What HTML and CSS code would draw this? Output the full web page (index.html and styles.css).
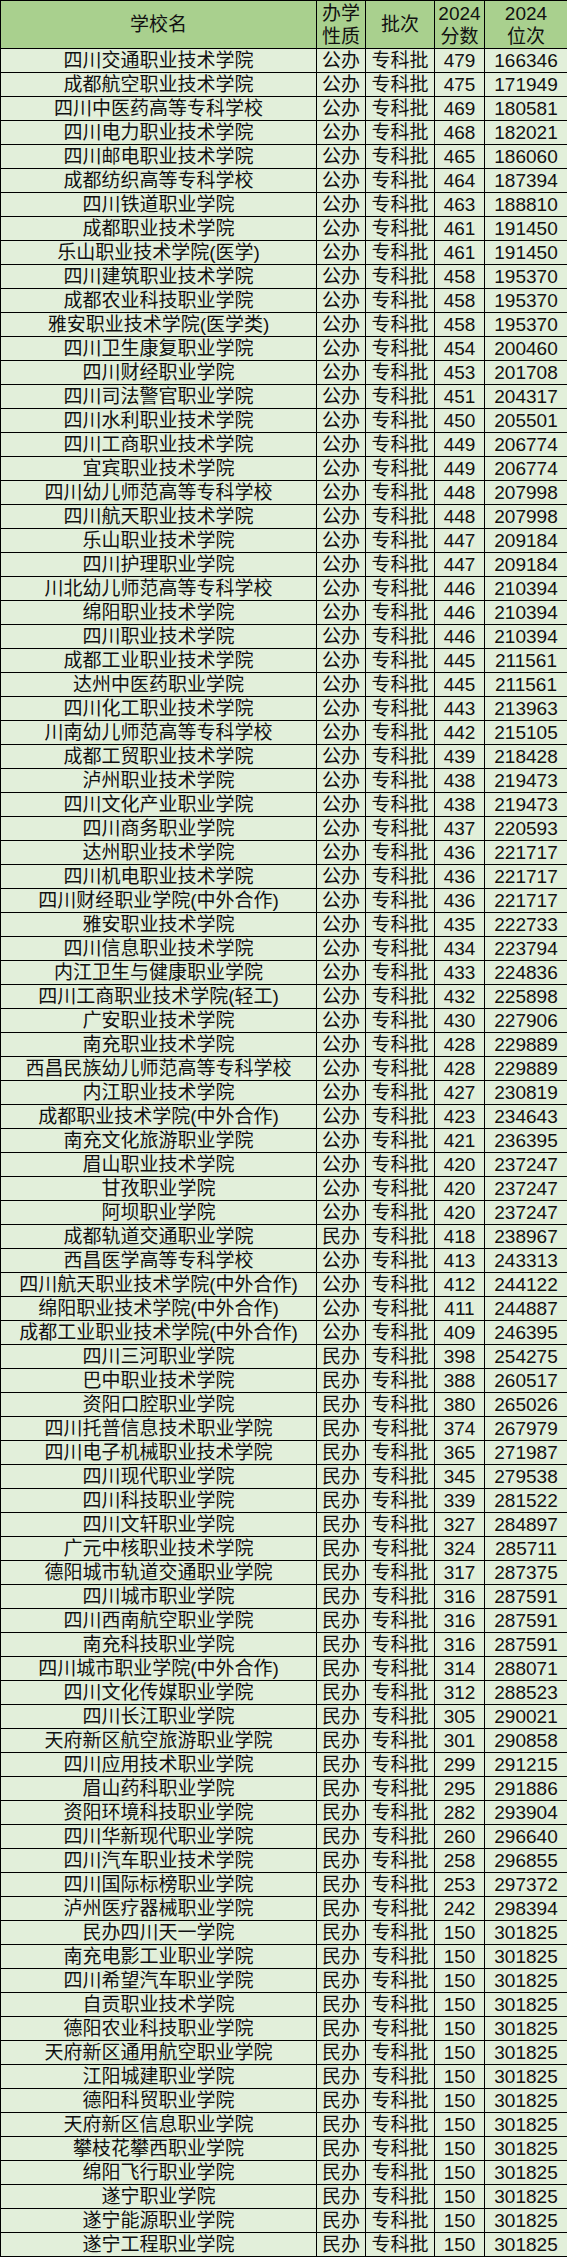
FILE: index.html
```html
<!DOCTYPE html>
<html lang="zh-CN">
<head>
<meta charset="utf-8">
<title>四川专科批院校分数线</title>
<link rel="stylesheet" href="styles.css">
</head>
<body>
<table class="score-table">
<colgroup>
<col class="c-name"><col class="c-type"><col class="c-batch"><col class="c-score"><col class="c-rank">
</colgroup>
<thead>
<tr class="head-row"><th>学校名</th><th>办学<br>性质</th><th>批次</th><th>2024<br>分数</th><th>2024<br>位次</th></tr>
</thead>
<tbody>
<tr><td>四川交通职业技术学院</td><td>公办</td><td>专科批</td><td>479</td><td>166346</td></tr>
<tr><td>成都航空职业技术学院</td><td>公办</td><td>专科批</td><td>475</td><td>171949</td></tr>
<tr><td>四川中医药高等专科学校</td><td>公办</td><td>专科批</td><td>469</td><td>180581</td></tr>
<tr><td>四川电力职业技术学院</td><td>公办</td><td>专科批</td><td>468</td><td>182021</td></tr>
<tr><td>四川邮电职业技术学院</td><td>公办</td><td>专科批</td><td>465</td><td>186060</td></tr>
<tr><td>成都纺织高等专科学校</td><td>公办</td><td>专科批</td><td>464</td><td>187394</td></tr>
<tr><td>四川铁道职业学院</td><td>公办</td><td>专科批</td><td>463</td><td>188810</td></tr>
<tr><td>成都职业技术学院</td><td>公办</td><td>专科批</td><td>461</td><td>191450</td></tr>
<tr><td>乐山职业技术学院(医学)</td><td>公办</td><td>专科批</td><td>461</td><td>191450</td></tr>
<tr><td>四川建筑职业技术学院</td><td>公办</td><td>专科批</td><td>458</td><td>195370</td></tr>
<tr><td>成都农业科技职业学院</td><td>公办</td><td>专科批</td><td>458</td><td>195370</td></tr>
<tr><td>雅安职业技术学院(医学类)</td><td>公办</td><td>专科批</td><td>458</td><td>195370</td></tr>
<tr><td>四川卫生康复职业学院</td><td>公办</td><td>专科批</td><td>454</td><td>200460</td></tr>
<tr><td>四川财经职业学院</td><td>公办</td><td>专科批</td><td>453</td><td>201708</td></tr>
<tr><td>四川司法警官职业学院</td><td>公办</td><td>专科批</td><td>451</td><td>204317</td></tr>
<tr><td>四川水利职业技术学院</td><td>公办</td><td>专科批</td><td>450</td><td>205501</td></tr>
<tr><td>四川工商职业技术学院</td><td>公办</td><td>专科批</td><td>449</td><td>206774</td></tr>
<tr><td>宜宾职业技术学院</td><td>公办</td><td>专科批</td><td>449</td><td>206774</td></tr>
<tr><td>四川幼儿师范高等专科学校</td><td>公办</td><td>专科批</td><td>448</td><td>207998</td></tr>
<tr><td>四川航天职业技术学院</td><td>公办</td><td>专科批</td><td>448</td><td>207998</td></tr>
<tr><td>乐山职业技术学院</td><td>公办</td><td>专科批</td><td>447</td><td>209184</td></tr>
<tr><td>四川护理职业学院</td><td>公办</td><td>专科批</td><td>447</td><td>209184</td></tr>
<tr><td>川北幼儿师范高等专科学校</td><td>公办</td><td>专科批</td><td>446</td><td>210394</td></tr>
<tr><td>绵阳职业技术学院</td><td>公办</td><td>专科批</td><td>446</td><td>210394</td></tr>
<tr><td>四川职业技术学院</td><td>公办</td><td>专科批</td><td>446</td><td>210394</td></tr>
<tr><td>成都工业职业技术学院</td><td>公办</td><td>专科批</td><td>445</td><td>211561</td></tr>
<tr><td>达州中医药职业学院</td><td>公办</td><td>专科批</td><td>445</td><td>211561</td></tr>
<tr><td>四川化工职业技术学院</td><td>公办</td><td>专科批</td><td>443</td><td>213963</td></tr>
<tr><td>川南幼儿师范高等专科学校</td><td>公办</td><td>专科批</td><td>442</td><td>215105</td></tr>
<tr><td>成都工贸职业技术学院</td><td>公办</td><td>专科批</td><td>439</td><td>218428</td></tr>
<tr><td>泸州职业技术学院</td><td>公办</td><td>专科批</td><td>438</td><td>219473</td></tr>
<tr><td>四川文化产业职业学院</td><td>公办</td><td>专科批</td><td>438</td><td>219473</td></tr>
<tr><td>四川商务职业学院</td><td>公办</td><td>专科批</td><td>437</td><td>220593</td></tr>
<tr><td>达州职业技术学院</td><td>公办</td><td>专科批</td><td>436</td><td>221717</td></tr>
<tr><td>四川机电职业技术学院</td><td>公办</td><td>专科批</td><td>436</td><td>221717</td></tr>
<tr><td>四川财经职业学院(中外合作)</td><td>公办</td><td>专科批</td><td>436</td><td>221717</td></tr>
<tr><td>雅安职业技术学院</td><td>公办</td><td>专科批</td><td>435</td><td>222733</td></tr>
<tr><td>四川信息职业技术学院</td><td>公办</td><td>专科批</td><td>434</td><td>223794</td></tr>
<tr><td>内江卫生与健康职业学院</td><td>公办</td><td>专科批</td><td>433</td><td>224836</td></tr>
<tr><td>四川工商职业技术学院(轻工)</td><td>公办</td><td>专科批</td><td>432</td><td>225898</td></tr>
<tr><td>广安职业技术学院</td><td>公办</td><td>专科批</td><td>430</td><td>227906</td></tr>
<tr><td>南充职业技术学院</td><td>公办</td><td>专科批</td><td>428</td><td>229889</td></tr>
<tr><td>西昌民族幼儿师范高等专科学校</td><td>公办</td><td>专科批</td><td>428</td><td>229889</td></tr>
<tr><td>内江职业技术学院</td><td>公办</td><td>专科批</td><td>427</td><td>230819</td></tr>
<tr><td>成都职业技术学院(中外合作)</td><td>公办</td><td>专科批</td><td>423</td><td>234643</td></tr>
<tr><td>南充文化旅游职业学院</td><td>公办</td><td>专科批</td><td>421</td><td>236395</td></tr>
<tr><td>眉山职业技术学院</td><td>公办</td><td>专科批</td><td>420</td><td>237247</td></tr>
<tr><td>甘孜职业学院</td><td>公办</td><td>专科批</td><td>420</td><td>237247</td></tr>
<tr><td>阿坝职业学院</td><td>公办</td><td>专科批</td><td>420</td><td>237247</td></tr>
<tr><td>成都轨道交通职业学院</td><td>民办</td><td>专科批</td><td>418</td><td>238967</td></tr>
<tr><td>西昌医学高等专科学校</td><td>公办</td><td>专科批</td><td>413</td><td>243313</td></tr>
<tr><td>四川航天职业技术学院(中外合作)</td><td>公办</td><td>专科批</td><td>412</td><td>244122</td></tr>
<tr><td>绵阳职业技术学院(中外合作)</td><td>公办</td><td>专科批</td><td>411</td><td>244887</td></tr>
<tr><td>成都工业职业技术学院(中外合作)</td><td>公办</td><td>专科批</td><td>409</td><td>246395</td></tr>
<tr><td>四川三河职业学院</td><td>民办</td><td>专科批</td><td>398</td><td>254275</td></tr>
<tr><td>巴中职业技术学院</td><td>民办</td><td>专科批</td><td>388</td><td>260517</td></tr>
<tr><td>资阳口腔职业学院</td><td>民办</td><td>专科批</td><td>380</td><td>265026</td></tr>
<tr><td>四川托普信息技术职业学院</td><td>民办</td><td>专科批</td><td>374</td><td>267979</td></tr>
<tr><td>四川电子机械职业技术学院</td><td>民办</td><td>专科批</td><td>365</td><td>271987</td></tr>
<tr><td>四川现代职业学院</td><td>民办</td><td>专科批</td><td>345</td><td>279538</td></tr>
<tr><td>四川科技职业学院</td><td>民办</td><td>专科批</td><td>339</td><td>281522</td></tr>
<tr><td>四川文轩职业学院</td><td>民办</td><td>专科批</td><td>327</td><td>284897</td></tr>
<tr><td>广元中核职业技术学院</td><td>民办</td><td>专科批</td><td>324</td><td>285711</td></tr>
<tr><td>德阳城市轨道交通职业学院</td><td>民办</td><td>专科批</td><td>317</td><td>287375</td></tr>
<tr><td>四川城市职业学院</td><td>民办</td><td>专科批</td><td>316</td><td>287591</td></tr>
<tr><td>四川西南航空职业学院</td><td>民办</td><td>专科批</td><td>316</td><td>287591</td></tr>
<tr><td>南充科技职业学院</td><td>民办</td><td>专科批</td><td>316</td><td>287591</td></tr>
<tr><td>四川城市职业学院(中外合作)</td><td>民办</td><td>专科批</td><td>314</td><td>288071</td></tr>
<tr><td>四川文化传媒职业学院</td><td>民办</td><td>专科批</td><td>312</td><td>288523</td></tr>
<tr><td>四川长江职业学院</td><td>民办</td><td>专科批</td><td>305</td><td>290021</td></tr>
<tr><td>天府新区航空旅游职业学院</td><td>民办</td><td>专科批</td><td>301</td><td>290858</td></tr>
<tr><td>四川应用技术职业学院</td><td>民办</td><td>专科批</td><td>299</td><td>291215</td></tr>
<tr><td>眉山药科职业学院</td><td>民办</td><td>专科批</td><td>295</td><td>291886</td></tr>
<tr><td>资阳环境科技职业学院</td><td>民办</td><td>专科批</td><td>282</td><td>293904</td></tr>
<tr><td>四川华新现代职业学院</td><td>民办</td><td>专科批</td><td>260</td><td>296640</td></tr>
<tr><td>四川汽车职业技术学院</td><td>民办</td><td>专科批</td><td>258</td><td>296855</td></tr>
<tr><td>四川国际标榜职业学院</td><td>民办</td><td>专科批</td><td>253</td><td>297372</td></tr>
<tr><td>泸州医疗器械职业学院</td><td>民办</td><td>专科批</td><td>242</td><td>298394</td></tr>
<tr><td>民办四川天一学院</td><td>民办</td><td>专科批</td><td>150</td><td>301825</td></tr>
<tr><td>南充电影工业职业学院</td><td>民办</td><td>专科批</td><td>150</td><td>301825</td></tr>
<tr><td>四川希望汽车职业学院</td><td>民办</td><td>专科批</td><td>150</td><td>301825</td></tr>
<tr><td>自贡职业技术学院</td><td>民办</td><td>专科批</td><td>150</td><td>301825</td></tr>
<tr><td>德阳农业科技职业学院</td><td>民办</td><td>专科批</td><td>150</td><td>301825</td></tr>
<tr><td>天府新区通用航空职业学院</td><td>民办</td><td>专科批</td><td>150</td><td>301825</td></tr>
<tr><td>江阳城建职业学院</td><td>民办</td><td>专科批</td><td>150</td><td>301825</td></tr>
<tr><td>德阳科贸职业学院</td><td>民办</td><td>专科批</td><td>150</td><td>301825</td></tr>
<tr><td>天府新区信息职业学院</td><td>民办</td><td>专科批</td><td>150</td><td>301825</td></tr>
<tr><td>攀枝花攀西职业学院</td><td>民办</td><td>专科批</td><td>150</td><td>301825</td></tr>
<tr><td>绵阳飞行职业学院</td><td>民办</td><td>专科批</td><td>150</td><td>301825</td></tr>
<tr><td>遂宁职业学院</td><td>民办</td><td>专科批</td><td>150</td><td>301825</td></tr>
<tr><td>遂宁能源职业学院</td><td>民办</td><td>专科批</td><td>150</td><td>301825</td></tr>
<tr><td>遂宁工程职业学院</td><td>民办</td><td>专科批</td><td>150</td><td>301825</td></tr>
</tbody>
</table>
</body>
</html>
```
FILE: styles.css
```css
html, body {
  margin: 0;
  padding: 0;
  background: #ffffff;
}

.score-table {
  border-collapse: collapse;
  table-layout: fixed;
  width: 567px;
  font-family: "Liberation Sans", "Noto Sans CJK SC", sans-serif;
  font-size: 19px;
  color: #111111;
}

.c-name { width: 316px; }
.c-type { width: 49px; }
.c-batch { width: 69px; }
.c-score { width: 50px; }
.c-rank { width: 83px; }

.score-table th,
.score-table td {
  border: 1px solid #000000;
  padding: 0;
  text-align: center;
  white-space: nowrap;
  overflow: hidden;
}

.score-table th {
  background: #a9d08e;
  font-weight: normal;
  height: 47px;
  line-height: 23px;
}

.score-table td {
  background: #e2efda;
  height: 23px;
  line-height: 23px;
}
```
